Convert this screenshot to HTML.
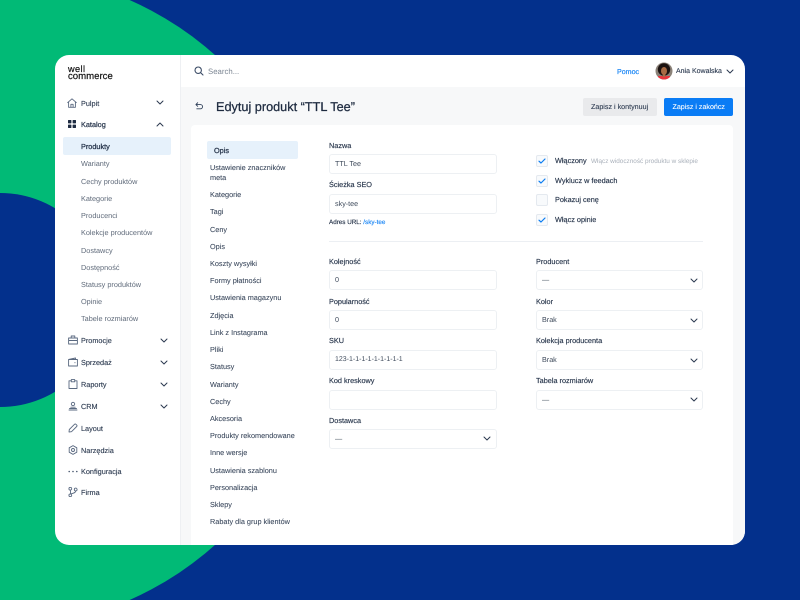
<!DOCTYPE html>
<html lang="pl"><head><meta charset="utf-8"><title>Edytuj produkt</title>
<style>
html,body{margin:0;padding:0;width:800px;height:600px;overflow:hidden;background:#03308c;font-family:"Liberation Sans",sans-serif}
#w{position:absolute;left:0;top:0;width:800px;height:600px;overflow:hidden;background:#03308c}
.abs,.t,.i,.c,svg{position:absolute}
.t{line-height:12px;height:12px;white-space:nowrap;font-size:7.3px;color:#5f6a7a;margin-top:1px;text-rendering:geometricPrecision}
.n{color:#2c3a50;-webkit-text-stroke:.12px #2c3a50}
.m{color:#354358;-webkit-text-stroke:.05px #354358}
.l{color:#26344a;-webkit-text-stroke:.15px #26344a}
.v{color:#3f4b5c;font-size:7.2px}
.i{width:166px;height:18px;border:1px solid #edf0f3;border-radius:3px;background:#fff;left:329px}
.r{left:536px;width:165px}
.c{left:536px;width:10px;height:10px;border:1px solid #e4e9ef;border-radius:2px;background:#f8fafc}
svg.ic{fill:none;stroke:#5a6980;stroke-width:.9;stroke-linecap:round;stroke-linejoin:round}
svg.ch{fill:none;stroke:#2c3a50;stroke-width:1;stroke-linecap:round;stroke-linejoin:round}
svg.ck{fill:none;stroke:#0a7cf2;stroke-width:1.2;stroke-linecap:round;stroke-linejoin:round}
</style></head><body><div id="w">
<div class="abs" style="left:-331px;top:-28px;width:656px;height:656px;border-radius:50%;background:#01ba76"></div>
<div class="abs" style="left:-107px;top:193px;width:214px;height:214px;border-radius:50%;background:#03308c"></div>
<div class="abs" style="left:55px;top:55px;width:690px;height:490px;border-radius:14px;background:#fff;overflow:hidden">
  <div class="abs" style="left:125px;top:0;width:1px;height:490px;background:#eef0f3"></div>
  <div class="abs" style="left:126px;top:32px;width:564px;height:458px;background:#f7f8f9"></div>
  <div class="abs" style="left:136px;top:70px;width:542px;height:420px;background:#fff;border-radius:4px 4px 0 0"></div>
</div>

<div class="t" style="left:68px;top:64px;font-size:9.200px;line-height:9px;height:9px;color:#111;-webkit-text-stroke:.2px #111;letter-spacing:.4px">well</div>
<div class="t" style="left:68px;top:71px;font-size:9.600px;line-height:9px;height:9px;color:#111;-webkit-text-stroke:.2px #111">commerce</div>

<div class="abs" style="left:63px;top:137px;width:108px;height:18px;background:#e6f1fb;border-radius:2px"></div>
<div class="t n" style="left:81px;top:97px">Pulpit</div>
<div class="t n" style="left:81px;top:118px;-webkit-text-stroke:.25px #2c3a50">Katalog</div>
<div class="t n" style="left:81px;top:140px;-webkit-text-stroke:.3px #2c3a50">Produkty</div>
<div class="t" style="left:81px;top:157px">Warianty</div>
<div class="t" style="left:81px;top:175px">Cechy produktów</div>
<div class="t" style="left:81px;top:192px">Kategorie</div>
<div class="t" style="left:81px;top:209px">Producenci</div>
<div class="t" style="left:81px;top:226px">Kolekcje producentów</div>
<div class="t" style="left:81px;top:244px">Dostawcy</div>
<div class="t" style="left:81px;top:261px">Dostępność</div>
<div class="t" style="left:81px;top:278px">Statusy produktów</div>
<div class="t" style="left:81px;top:295px">Opinie</div>
<div class="t" style="left:81px;top:312px">Tabele rozmiarów</div>
<div class="t n" style="left:81px;top:334px">Promocje</div>
<div class="t n" style="left:81px;top:356px">Sprzedaż</div>
<div class="t n" style="left:81px;top:378px">Raporty</div>
<div class="t n" style="left:81px;top:400px">CRM</div>
<div class="t n" style="left:81px;top:422px">Layout</div>
<div class="t n" style="left:81px;top:444px">Narzędzia</div>
<div class="t n" style="left:81px;top:465px">Konfiguracja</div>
<div class="t n" style="left:81px;top:486px">Firma</div>

<svg class="ic" style="left:67px;top:98px" width="10" height="10" viewBox="0 0 10 10"><path d="M.7 4.600 5 .8l4.300 3.800M1.600 4v5.300h6.800V4M3.900 9.300V6.300h2.200v3"/></svg>
<svg style="left:68px;top:120px" width="8" height="8" viewBox="0 0 8 8" fill="#1f2c42"><rect width="3.400" height="3.400" rx=".5"/><rect x="4.600" width="3.400" height="3.400" rx=".5"/><rect y="4.600" width="3.400" height="3.400" rx=".5"/><rect x="4.600" y="4.600" width="3.400" height="3.400" rx=".5"/></svg>
<svg class="ic" style="left:68px;top:335px" width="10" height="10" viewBox="0 0 10 10"><path d="M.6 3h8.800v6H.6zM3.200 3V1h3.600v2M.6 5.500h8.800"/></svg>
<svg class="ic" style="left:68px;top:357px" width="10" height="10" viewBox="0 0 10 10"><path d="M.6 2.500h8.800v6.500H.6zM.6 2.500 7.500 1v1.500M6.800 5.700h.3"/></svg>
<svg class="ic" style="left:68px;top:379px" width="10" height="10" viewBox="0 0 10 10"><path d="M2.800 1.800H1v7.700h8V1.800H7.200M3.300 .6h3.400v2.200H3.300z"/></svg>
<svg class="ic" style="left:68px;top:401px" width="10" height="10" viewBox="0 0 10 10"><path d="M3.300 3a1.700 1.700 0 1 0 3.400 0 1.700 1.700 0 1 0-3.400 0M2.800 6.200h4.400M1 9h8M1.500 7.500h7"/></svg>
<svg class="ic" style="left:68px;top:423px" width="10" height="10" viewBox="0 0 10 10"><path d="M1 9 1.300 6.500 6.500 1.300a1 1 0 0 1 1.400 0l.8.8a1 1 0 0 1 0 1.400L3.500 8.700z"/></svg>
<svg class="ic" style="left:68px;top:445px" width="10" height="10" viewBox="0 0 10 10"><path d="M5 .6 8.800 2.800v4.400L5 9.400 1.200 7.200V2.800zM3.500 5a1.500 1.500 0 1 0 3 0 1.500 1.500 0 1 0-3 0"/></svg>
<svg style="left:68px;top:470px" width="10" height="3" viewBox="0 0 10 3" fill="#46566e"><circle cx="1.200" cy="1.500" r=".8"/><circle cx="5" cy="1.500" r=".8"/><circle cx="8.800" cy="1.500" r=".8"/></svg>
<svg class="ic" style="left:68px;top:487px" width="10" height="10" viewBox="0 0 10 10"><path d="M2.500 3v4M.9 1.700a1.400 1.400 0 1 0 2.800 0 1.400 1.400 0 1 0-2.800 0M.9 8.300a1.400 1.400 0 1 0 2.800 0 1.400 1.400 0 1 0-2.800 0M6.300 2.500a1.400 1.400 0 1 0 2.800 0 1.400 1.400 0 1 0-2.800 0M7.700 4c0 1.800-2 2-5.200 3"/></svg>

<svg class="ch" style="left:156px;top:100px" width="8" height="5" viewBox="0 0 8 5"><path d="M1 1 4 4 7 1"/></svg>
<svg class="ch" style="left:156px;top:122px" width="8" height="5" viewBox="0 0 8 5"><path d="M1 4 4 1 7 4"/></svg>
<svg class="ch" style="left:160px;top:338px" width="8" height="5" viewBox="0 0 8 5"><path d="M1 1 4 4 7 1"/></svg>
<svg class="ch" style="left:160px;top:360px" width="8" height="5" viewBox="0 0 8 5"><path d="M1 1 4 4 7 1"/></svg>
<svg class="ch" style="left:160px;top:382px" width="8" height="5" viewBox="0 0 8 5"><path d="M1 1 4 4 7 1"/></svg>
<svg class="ch" style="left:160px;top:404px" width="8" height="5" viewBox="0 0 8 5"><path d="M1 1 4 4 7 1"/></svg>

<svg class="abs" style="left:194px;top:66px;fill:none;stroke:#3b4c66;stroke-width:1.100;stroke-linecap:round" width="10" height="10" viewBox="0 0 10 10"><circle cx="4.200" cy="4.200" r="3.200"/><path d="M6.600 6.600 9 9"/></svg>
<div class="t" style="left:208px;top:65px;font-size:7.800px;color:#7d8794">Search...</div>
<div class="t" style="left:617px;top:65px;font-size:7.100px;color:#1a86f5;-webkit-text-stroke:.2px #1a86f5">Pomoc</div>
<svg style="left:655px;top:62px" width="18" height="18" viewBox="0 0 18 18"><defs><clipPath id="av"><circle cx="9" cy="9" r="8.500"/></clipPath></defs><g clip-path="url(#av)"><rect width="18" height="18" fill="#8a8178"/><circle cx="9" cy="7.500" r="6.200" fill="#1b1210"/><rect x="3" y="14" width="12" height="5" fill="#e8343e"/><ellipse cx="9" cy="9" rx="3" ry="4" fill="#a86a44"/><rect x="7.800" y="12" width="2.500" height="3" fill="#a86a44"/></g></svg>
<div class="t n" style="left:676px;top:65px;font-size:7px">Ania Kowalska</div>
<svg class="ch" style="left:726px;top:69px" width="8" height="5" viewBox="0 0 8 5"><path d="M1 1 4 4 7 1"/></svg>

<svg class="abs" style="left:195px;top:102px;fill:none;stroke:#2f405a;stroke-width:1;stroke-linecap:round;stroke-linejoin:round" width="9" height="9" viewBox="0 0 10 10"><path d="M3 .8 1 2.800l2 2M1 2.800h5a2.300 2.300 0 0 1 0 4.800H2"/></svg>
<div class="t" style="left:216px;top:98px;height:16px;line-height:16px;font-size:12.700px;color:#1d2a3f;-webkit-text-stroke:.25px #1d2a3f">Edytuj produkt “TTL Tee”</div>
<div class="abs" style="left:583px;top:98px;width:74px;height:18px;background:#e9eaec;border-radius:2px"></div>
<div class="t" style="left:591px;top:100px;font-size:7.150px;color:#2c3a50;-webkit-text-stroke:.1px #2c3a50">Zapisz i kontynuuj</div>
<div class="abs" style="left:664px;top:98px;width:69px;height:18px;background:#0a7cf5;border-radius:2px"></div>
<div class="t" style="left:672.500px;top:100px;font-size:7.100px;color:#fff;-webkit-text-stroke:.1px #fff">Zapisz i zakończ</div>

<div class="abs" style="left:207px;top:141px;width:91px;height:18px;background:#e6f1fb;border-radius:2px"></div>
<div class="t n" style="left:214px;top:144px;-webkit-text-stroke:.3px #2c3a50">Opis</div>
<div class="t m" style="left:210px;top:161px">Ustawienie znaczników</div>
<div class="t m" style="left:210px;top:171px">meta</div>
<div class="t m" style="left:210px;top:188px">Kategorie</div>
<div class="t m" style="left:210px;top:205px">Tagi</div>
<div class="t m" style="left:210px;top:223px">Ceny</div>
<div class="t m" style="left:210px;top:240px">Opis</div>
<div class="t m" style="left:210px;top:257px">Koszty wysyłki</div>
<div class="t m" style="left:210px;top:274px">Formy płatności</div>
<div class="t m" style="left:210px;top:291px">Ustawienia magazynu</div>
<div class="t m" style="left:210px;top:309px">Zdjęcia</div>
<div class="t m" style="left:210px;top:326px">Link z Instagrama</div>
<div class="t m" style="left:210px;top:343px">Pliki</div>
<div class="t m" style="left:210px;top:360px">Statusy</div>
<div class="t m" style="left:210px;top:378px">Warianty</div>
<div class="t m" style="left:210px;top:395px">Cechy</div>
<div class="t m" style="left:210px;top:412px">Akcesoria</div>
<div class="t m" style="left:210px;top:429px">Produkty rekomendowane</div>
<div class="t m" style="left:210px;top:446px">Inne wersje</div>
<div class="t m" style="left:210px;top:464px">Ustawienia szablonu</div>
<div class="t m" style="left:210px;top:481px">Personalizacja</div>
<div class="t m" style="left:210px;top:498px">Sklepy</div>
<div class="t m" style="left:210px;top:515px">Rabaty dla grup klientów</div>

<div class="t l" style="left:329px;top:139px">Nazwa</div>
<div class="i" style="top:154px"></div><div class="t v" style="left:335px;top:157px">TTL Tee</div>
<div class="t l" style="left:329px;top:178px">Ścieżka SEO</div>
<div class="i" style="top:194px"></div><div class="t v" style="left:335px;top:197px">sky-tee</div>
<div class="t l" style="left:329px;top:216px;font-size:6.300px">Adres URL: <span style="color:#1a86f5;-webkit-text-stroke:.15px #1a86f5">/sky-tee</span></div>
<div class="abs" style="left:329px;top:241px;width:374px;height:1px;background:#eceff3"></div>

<div class="t l" style="left:329px;top:255px">Kolejność</div>
<div class="i" style="top:270px"></div><div class="t v" style="left:335px;top:273px">0</div>
<div class="t l" style="left:329px;top:295px">Popularność</div>
<div class="i" style="top:310px"></div><div class="t v" style="left:335px;top:313px">0</div>
<div class="t l" style="left:329px;top:334px">SKU</div>
<div class="i" style="top:350px"></div><div class="t v" style="left:335px;top:353px;font-size:7px">123-1-1-1-1-1-1-1-1-1</div>
<div class="t l" style="left:329px;top:374px">Kod kreskowy</div>
<div class="i" style="top:390px"></div>
<div class="t l" style="left:329px;top:414px">Dostawca</div>
<div class="i" style="top:429px"></div><div class="t v" style="left:335px;top:432px">—</div>
<svg class="ch" style="left:483px;top:436px" width="8" height="5" viewBox="0 0 8 5"><path d="M1 1 4 4 7 1"/></svg>

<div class="c" style="top:155px"></div><svg class="ck" style="left:538px;top:158px" width="8" height="6" viewBox="0 0 8 6"><path d="M1 3.200 3 5 7 1"/></svg>
<div class="c" style="top:175px"></div><svg class="ck" style="left:538px;top:178px" width="8" height="6" viewBox="0 0 8 6"><path d="M1 3.200 3 5 7 1"/></svg>
<div class="c" style="top:194px"></div>
<div class="c" style="top:214px"></div><svg class="ck" style="left:538px;top:217px" width="8" height="6" viewBox="0 0 8 6"><path d="M1 3.200 3 5 7 1"/></svg>
<div class="t l" style="left:555px;top:154px">Włączony</div>
<div class="t" style="left:591px;top:155px;font-size:6.400px;color:#a9b0ba">Włącz widoczność produktu w sklepie</div>
<div class="t l" style="left:555px;top:174px">Wyklucz w feedach</div>
<div class="t l" style="left:555px;top:193px">Pokazuj cenę</div>
<div class="t l" style="left:555px;top:213px">Włącz opinie</div>

<div class="t l" style="left:536px;top:255px">Producent</div>
<div class="i r" style="top:270px"></div><div class="t v" style="left:542px;top:273px">—</div>
<svg class="ch" style="left:690px;top:278px" width="8" height="5" viewBox="0 0 8 5"><path d="M1 1 4 4 7 1"/></svg>
<div class="t l" style="left:536px;top:295px">Kolor</div>
<div class="i r" style="top:310px"></div><div class="t v" style="left:542px;top:313px">Brak</div>
<svg class="ch" style="left:690px;top:318px" width="8" height="5" viewBox="0 0 8 5"><path d="M1 1 4 4 7 1"/></svg>
<div class="t l" style="left:536px;top:334px">Kolekcja producenta</div>
<div class="i r" style="top:350px"></div><div class="t v" style="left:542px;top:353px">Brak</div>
<svg class="ch" style="left:690px;top:358px" width="8" height="5" viewBox="0 0 8 5"><path d="M1 1 4 4 7 1"/></svg>
<div class="t l" style="left:536px;top:374px">Tabela rozmiarów</div>
<div class="i r" style="top:390px"></div><div class="t v" style="left:542px;top:393px">—</div>
<svg class="ch" style="left:690px;top:397px" width="8" height="5" viewBox="0 0 8 5"><path d="M1 1 4 4 7 1"/></svg>
</div></body></html>
